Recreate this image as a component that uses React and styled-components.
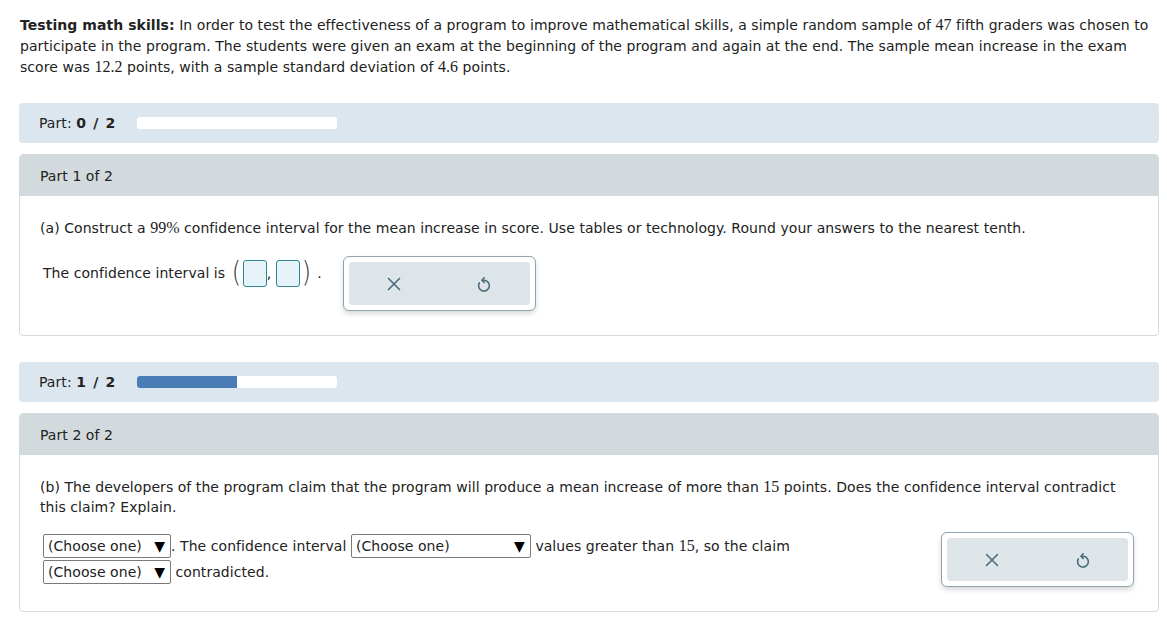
import React from 'react';
import styled, { createGlobalStyle } from 'styled-components';

const GlobalStyle = createGlobalStyle`
  body {
    margin: 0;
    background: #fff;
    font-family: Verdana, "DejaVu Sans", sans-serif;
    font-size: 14px;
    letter-spacing: 0.06px;
    color: #222;
  }
`
const Page = styled.div`
  padding: 15px 8px 0 19px;
`
const Intro = styled.p`
  margin: 0;
  padding-left: 1px;
  line-height: 21px;
`
const Num = styled.span`
  font-family: "Liberation Serif", "Times New Roman", serif;
  font-size: 16px;
  line-height: 1;
  letter-spacing: 0;
`
const PartBar = styled.div`
  margin-top: ${props => props.first ? '25px' : '26px'};
  height: 40px;
  background: #dbe6ef;
  border-radius: 4px;
  display: flex;
  align-items: center;
  padding-left: 20px;
`
const PartLabel = styled.span`
  width: 78px;
  margin-right: 20px;
  white-space: nowrap;
  b { letter-spacing: 1.2px; }
`
const Track = styled.div`
  width: 200px;
  height: 12px;
  background: #fff;
  border-radius: 3px;
  overflow: hidden;
`
const Fill = styled.div`
  height: 100%;
  background: #4a7db6;
`
const Card = styled.section`
  margin-top: 11px;
  border: 1px solid #d3dbde;
  border-radius: 4px;
  overflow: hidden;
`
const CardHeader = styled.div`
  height: 41px;
  background: #d2dadd;
  display: flex;
  align-items: center;
  padding-left: 20px;
`
const CardBody = styled.div`
  padding: 22px 20px 24px;
`
const Question = styled.p`
  margin: 0;
  line-height: 20px;
`
const AnswerRow = styled.div`
  display: flex;
  align-items: flex-start;
  margin-top: ${props => props.gap}px;
  gap: 21px;
`
const Answer = styled.div`
  padding: ${props => props.top}px 0 0 3px;
  flex: ${props => props.grow ? 1 : 'none'};
`
const Line = styled.div`
  display: flex;
  align-items: center;
  min-height: 26px;
  white-space: pre;
`
const Paren = styled.span`
  font-family: "DejaVu Sans", sans-serif;
  font-size: 28px;
  font-weight: 300;
  color: #333;
  line-height: 1;
  transform: scaleX(0.85);
  margin: 0 1px;
`
const Blank = styled.span`
  display: inline-block;
  width: 22px;
  height: 25px;
  border: 1px solid #2d8896;
  border-radius: 3px;
  background: #e6f3f8;
`
const Select = styled.div`
  box-sizing: border-box;
  width: ${props => props.width}px;
  height: 24px;
  border: 1px solid #7a7a7a;
  border-radius: 2px;
  display: flex;
  align-items: center;
  justify-content: space-between;
  padding: 0 5px 0 4px;
  margin: 1px 0;
  background: #fff;
  color: #222;
`
const Arrow = styled.span`
  font-size: 14px;
  color: #000;
`
const ToolBox = styled.div`
  box-sizing: border-box;
  width: 193px;
  height: 55px;
  padding: 5px;
  border: 1px solid #8fa5af;
  border-radius: 6px;
  background: #fff;
  box-shadow: 0 3px 5px rgba(0, 0, 0, 0.15);
  margin-right: ${props => props.right || 0}px;
  flex: none;
`
const ToolInner = styled.div`
  height: 100%;
  display: flex;
  background: #dee5e8;
  border-radius: 4px;
`
const ToolButton = styled.button`
  flex: 1;
  border: none;
  background: transparent;
  display: flex;
  align-items: center;
  justify-content: center;
  padding: 0;
  cursor: pointer;
`

const ClearIcon = () => (
  <svg width="14" height="14" viewBox="0 0 14 14">
    <path d="M1.5 1.5 L12.5 12.5 M12.5 1.5 L1.5 12.5" stroke="#4a6b79" strokeWidth="1.6" strokeLinecap="round" fill="none" />
  </svg>
)

const UndoIcon = () => (
  <svg width="16" height="18" viewBox="0 0 16 18">
    <path d="M3.3 7.9 A5.4 5.4 0 1 0 8 5.2 L6.4 5.2" stroke="#4a6b79" strokeWidth="1.6" strokeLinecap="round" fill="none" />
    <path d="M8.2 2.8 L6 5.2 L8.2 7.5" stroke="#4a6b79" strokeWidth="1.6" strokeLinecap="round" strokeLinejoin="round" fill="none" />
  </svg>
)

function Tools({ right }) {
  return (
    <ToolBox right={right}>
      <ToolInner>
        <ToolButton aria-label="Clear"><ClearIcon /></ToolButton>
        <ToolButton aria-label="Undo"><UndoIcon /></ToolButton>
      </ToolInner>
    </ToolBox>
  )
}

function Progress({ done, total, first }) {
  return (
    <PartBar first={first}>
      <PartLabel>Part: <b>{done} / {total}</b></PartLabel>
      <Track>
        <Fill style={{ width: `${(done / total) * 100}%` }} />
      </Track>
    </PartBar>
  )
}

function Choose({ width }) {
  return (
    <Select width={width}>
      <span>(Choose one)</span>
      <Arrow>▼</Arrow>
    </Select>
  )
}

export default function App() {
  return (
    <Page>
      <GlobalStyle />
      <Intro>
        <b>Testing math skills:</b> In order to test the effectiveness of a program to improve mathematical skills, a simple random sample of <Num>47</Num> fifth graders was chosen to participate in the program. The students were given an exam at the beginning of the program and again at the end. The sample mean increase in the exam score was <Num>12.2</Num> points, with a sample standard deviation of <Num>4.6</Num> points.
      </Intro>

      <Progress done={0} total={2} first />
      <Card>
        <CardHeader>Part 1 of 2</CardHeader>
        <CardBody>
          <Question>
            (a) Construct a <Num>99%</Num> confidence interval for the mean increase in score. Use tables or technology. Round your answers to the nearest tenth.
          </Question>
          <AnswerRow gap={18}>
            <Answer top={3}>
              <Line>
                The confidence interval is{' '}
                <Paren>(</Paren>
                <Blank />
                <span>, </span>
                <Blank />
                <Paren>)</Paren>
                <span> .</span>
              </Line>
            </Answer>
            <Tools />
          </AnswerRow>
        </CardBody>
      </Card>

      <Progress done={1} total={2} />
      <Card>
        <CardHeader>Part 2 of 2</CardHeader>
        <CardBody>
          <Question>
            (b) The developers of the program claim that the program will produce a mean increase of more than <Num>15</Num> points. Does the confidence interval contradict this claim? Explain.
          </Question>
          <AnswerRow gap={15}>
            <Answer top={1} grow>
              <Line>
                <Choose width={128} />
                <span>. The confidence interval </span>
                <Choose width={180} />
                <span> values greater than <Num>15</Num>, so the claim</span>
              </Line>
              <Line>
                <Choose width={128} />
                <span> contradicted.</span>
              </Line>
            </Answer>
            <Tools right={4} />
          </AnswerRow>
        </CardBody>
      </Card>
    </Page>
  )
}
